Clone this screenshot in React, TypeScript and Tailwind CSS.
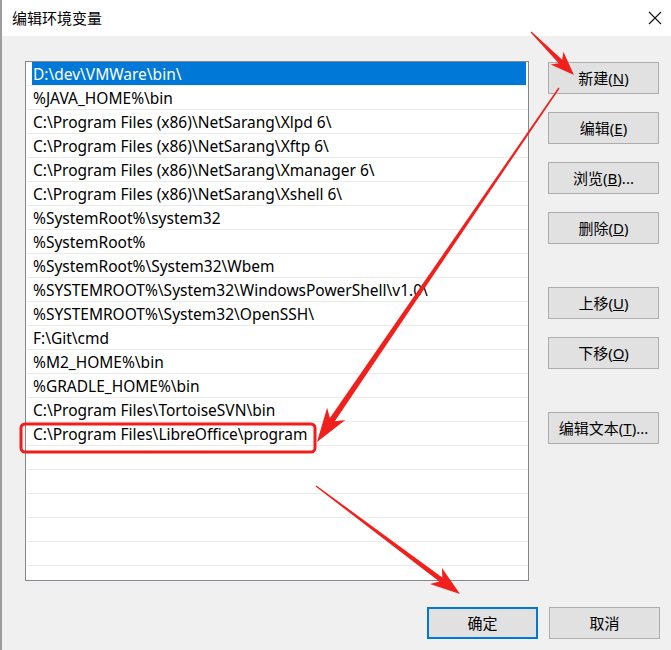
import React from "react";

const rows = [
  "D:\\dev\\VMWare\\bin\\",
  "%JAVA_HOME%\\bin",
  "C:\\Program Files (x86)\\NetSarang\\Xlpd 6\\",
  "C:\\Program Files (x86)\\NetSarang\\Xftp 6\\",
  "C:\\Program Files (x86)\\NetSarang\\Xmanager 6\\",
  "C:\\Program Files (x86)\\NetSarang\\Xshell 6\\",
  "%SystemRoot%\\system32",
  "%SystemRoot%",
  "%SystemRoot%\\System32\\Wbem",
  "%SYSTEMROOT%\\System32\\WindowsPowerShell\\v1.0\\",
  "%SYSTEMROOT%\\System32\\OpenSSH\\",
  "F:\\Git\\cmd",
  "%M2_HOME%\\bin",
  "%GRADLE_HOME%\\bin",
  "C:\\Program Files\\TortoiseSVN\\bin",
  "C:\\Program Files\\LibreOffice\\program",
  "",
  "",
  "",
  "",
  "",
  "",
];

const font = {
  fontFamily: '"Noto Sans", "Noto Sans CJK SC", sans-serif',
};

function arrowPoints(
  x1: number,
  y1: number,
  x2: number,
  y2: number,
  headLen: number,
  headHalf: number,
  w0: number,
  w1: number
) {
  const dx = x2 - x1;
  const dy = y2 - y1;
  const len = Math.hypot(dx, dy);
  const ux = dx / len;
  const uy = dy / len;
  const px = -uy;
  const py = ux;
  const bx = x2 - ux * headLen;
  const by = y2 - uy * headLen;
  const nx = x2 - ux * (headLen * 0.8);
  const ny = y2 - uy * (headLen * 0.8);
  const pts = [
    [x1 + (px * w0) / 2, y1 + (py * w0) / 2],
    [nx + (px * w1) / 2, ny + (py * w1) / 2],
    [bx + px * headHalf, by + py * headHalf],
    [x2, y2],
    [bx - px * headHalf, by - py * headHalf],
    [nx - (px * w1) / 2, ny - (py * w1) / 2],
    [x1 - (px * w0) / 2, y1 - (py * w0) / 2],
  ];
  return pts.map((p) => `${p[0].toFixed(1)},${p[1].toFixed(1)}`).join(" ");
}

function Btn({
  children,
  className = "",
  primary = false,
}: {
  children: React.ReactNode;
  className?: string;
  primary?: boolean;
}) {
  return (
    <div
      className={
        "flex h-[32px] w-[111px] items-center justify-center bg-[#e1e1e1] pt-[1px] text-[15px] text-black " +
        (primary ? "border-2 border-[#0078d7] " : "border border-[#adadad] ") +
        className
      }
    >
      {children}
    </div>
  );
}

export default function App() {
  return (
    <div
      className="relative h-[650px] w-[671px] overflow-hidden border-l-2 border-[#9c9c9c] bg-[#f0f0f0]"
      style={font}
    >
      {/* title bar */}
      <div className="flex h-[36px] items-center justify-between bg-white pl-[10px] pr-[8px]">
        <span className="text-[15px] leading-none text-black">编辑环境变量</span>
        <svg width="14" height="14" viewBox="0 0 14 14" className="mr-[1px]">
          <path d="M1 1 L13 13 M13 1 L1 13" stroke="#111" strokeWidth="1.1" />
        </svg>
      </div>

      {/* body */}
      <div className="flex pl-[23px] pt-[25px]">
        <div className="h-[520px] w-[504px] overflow-hidden border border-[#828790] bg-white">
          {rows.map((r, i) => (
            <div
              key={i}
              className="ml-[1px] flex h-[24px] items-stretch border-b border-[#ececec] pr-[2px]"
            >
              <div
                className={
                  "ml-[5px] flex flex-1 items-center pl-[1px] pt-[3px] text-[15.5px] leading-none " +
                  (i === 0 ? "bg-[#0078d7] text-white" : "text-black")
                }
              >
                {r}
              </div>
            </div>
          ))}
        </div>

        <div className="ml-[19px] flex flex-col pt-[1px]">
          <Btn>
            新建(<u>N</u>)
          </Btn>
          <Btn className="mt-[18px]">
            编辑(<u>E</u>)
          </Btn>
          <Btn className="mt-[18px]">
            浏览(<u>B</u>)...
          </Btn>
          <Btn className="mt-[18px]">
            删除(<u>D</u>)
          </Btn>
          <Btn className="mt-[43px]">
            上移(<u>U</u>)
          </Btn>
          <Btn className="mt-[18px]">
            下移(<u>O</u>)
          </Btn>
          <Btn className="mt-[43px]">
            编辑文本(<u>T</u>)...
          </Btn>
        </div>
      </div>

      <div className="flex justify-end gap-[11px] pr-[11px] pt-[26px]">
        <Btn primary>确定</Btn>
        <Btn>取消</Btn>
      </div>

      {/* annotations */}
      <svg
        className="pointer-events-none absolute left-[-2px] top-0"
        width="671"
        height="650"
        viewBox="0 0 671 650"
      >
        <rect
          x="21"
          y="424"
          width="294"
          height="28"
          rx="4"
          fill="none"
          stroke="#f01d1d"
          strokeWidth="3"
        />
        <polygon points={arrowPoints(531, 32, 574, 75, 24, 9, 1, 5)} fill="#f2201c" />
        <polygon points={arrowPoints(559, 88, 317, 442, 34, 11, 1.5, 6)} fill="#f2201c" />
        <polygon points={arrowPoints(316, 486, 460, 594, 30, 10, 1.5, 5)} fill="#f2201c" />
      </svg>
    </div>
  );
}
